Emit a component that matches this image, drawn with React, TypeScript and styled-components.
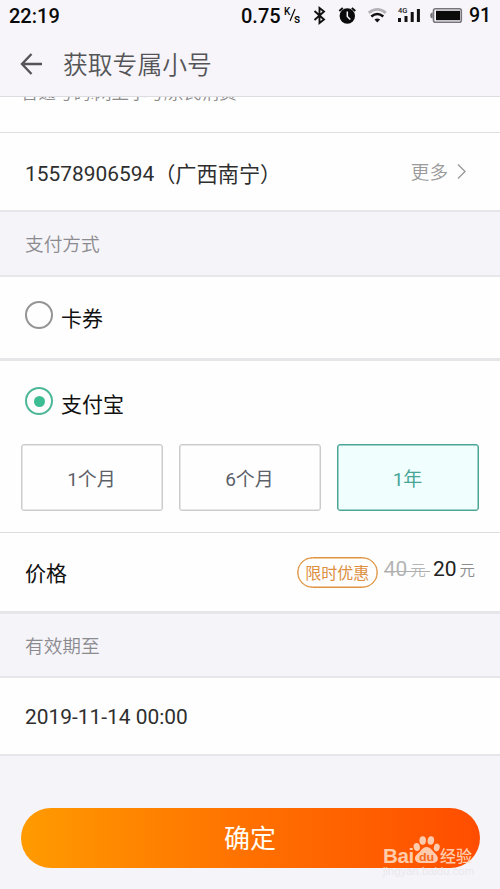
import React, { useState } from "react";
import styled, { createGlobalStyle } from "styled-components";

const GlobalStyle = createGlobalStyle`
  * { box-sizing: border-box; }
  body {
    margin: 0;
    background: #f5f4f9;
    font-family: Roboto, "Noto Sans CJK SC", sans-serif;
    color: #2e2e2e;
  }
  button { font-family: inherit; }
`;

const Screen = styled.div`
  position: relative;
  display: flex;
  flex-direction: column;
  width: 500px;
  height: 889px;
  overflow: hidden;
  background: #f5f4f9;
`;

const StatusBar = styled.div`
  display: flex;
  align-items: center;
  justify-content: space-between;
  flex: none;
  height: 32px;
  padding: 0 9px;
  background: #f7f5fa;
  color: #0a0a0a;
  font-size: 20px;
  font-weight: 500;
  line-height: 32px;
`;

const StatusIcons = styled.div`
  display: flex;
  align-items: center;
  height: 32px;
  svg { display: block; flex: none; }
`;

const Speed = styled.span`
  width: 43px;
  white-space: nowrap;
`;

const Battery = styled.span`
  width: 22px;
  white-space: nowrap;
  font-size: 19.5px;
`;

const TitleBar = styled.header`
  display: flex;
  align-items: center;
  flex: none;
  height: 65px;
  padding: 0 20px;
  gap: 20px;
  background: #f7f5fa;
  border-bottom: 1px solid #dddce0;
`;

const Title = styled.h1`
  margin: 0;
  padding-top: 3px;
  font-size: 24.8px;
  line-height: 36px;
  font-weight: 350;
  color: #555558;
`;

const ClippedRow = styled.div`
  flex: none;
  height: 36px;
  padding-left: 21px;
  overflow: hidden;
  background: #fefefe;
  border-bottom: 1px solid #dedee0;
`;

const ClippedText = styled.p`
  margin: -14px 0 0;
  font-size: 17.4px;
  line-height: 20px;
  font-weight: 350;
  color: #8c8c8c;
`;

const Row = styled.div<{ $h: number; $line?: number; $top?: number }>`
  display: flex;
  align-items: center;
  flex: none;
  height: ${(p) => p.$h}px;
  padding: ${(p) => p.$top ?? 0}px 25px 0;
  background: #fefefe;
  border-bottom: ${(p) => p.$line ?? 2}px solid #e6e5e9;
`;

const SectionTitle = styled.div<{ $h: number }>`
  display: flex;
  align-items: center;
  flex: none;
  height: ${(p) => p.$h}px;
  padding: 0 25px 2px;
  border-bottom: 2px solid #e7e6ea;
  font-size: 18.7px;
  font-weight: 350;
  color: #8b8a8f;
`;

const Value = styled.span`
  display: flex;
  padding-top: 1px;
  font-size: 20.9px;
  line-height: 30px;
  white-space: nowrap;
`;

const Region = styled.span`
  padding-top: 1px;
  font-size: 21.2px;
`;

const RowLabel = styled.span`
  padding-top: 3px;
  font-size: 21px;
  line-height: 30px;
  color: #111;
`;

const More = styled.span`
  display: flex;
  align-items: center;
  gap: 9px;
  margin-left: auto;
  padding: 0 8px 1px 0;
  font-size: 18.6px;
  line-height: 28px;
  font-weight: 350;
  color: #9a9a9a;
  svg { margin-top: -3px; }
`;

const RadioRow = styled.div<{ $h: number }>`
  display: flex;
  align-items: flex-start;
  height: ${(p) => p.$h}px;
  gap: 8px;
  cursor: pointer;
`;

const Radio = styled.span<{ $on: boolean }>`
  display: flex;
  align-items: center;
  justify-content: center;
  width: 28px;
  height: 28px;
  border: 2px solid ${(p) => (p.$on ? "#4cb898" : "#949494")};
  border-radius: 50%;
  &::after {
    content: "";
    width: 11px;
    height: 11px;
    border-radius: 50%;
    background: ${(p) => (p.$on ? "#3dbd94" : "transparent")};
  }
`;

const RadioLabel = styled.span`
  padding-top: 3px;
  font-size: 21px;
  line-height: 30px;
  color: #111;
`;

const CardRow = styled.div`
  flex: none;
  height: 84px;
  padding: 24px 25px 0;
  background: #fefefe;
  border-bottom: 3px solid #e6e5e8;
`;

const AlipayBlock = styled.div`
  flex: none;
  height: 172px;
  padding-top: 26px;
  background: #fefefe;
  border-bottom: 1px solid #dddde0;
  ${RadioRow} { padding-left: 25px; }
`;

const Plans = styled.div`
  display: grid;
  grid-template-columns: repeat(3, 142px);
  column-gap: 16px;
  padding-left: 21px;
`;

const Plan = styled.button<{ $on: boolean }>`
  height: 67px;
  padding: 0 1px 0 0;
  border: 1px solid ${(p) => (p.$on ? "#4aa597" : "#cbcbcb")};
  box-shadow: inset 0 0 0 0.5px ${(p) => (p.$on ? "#4aa597" : "#cfcfcf")};
  border-radius: 3px;
  background: ${(p) => (p.$on ? "#f0fefe" : "#fefefe")};
  color: ${(p) => (p.$on ? "#48a596" : "#5c6068")};
  font-size: 19px;
`;

const PriceBox = styled.div`
  display: flex;
  align-items: center;
  margin-left: auto;
`;

const Badge = styled.span`
  width: 81px;
  height: 31px;
  margin-right: 6px;
  border: 1px solid #df9340;
  box-shadow: inset 0 0 0 0.5px #df9340;
  border-radius: 16px;
  font-size: 16px;
  line-height: 31px;
  text-align: center;
  color: #dc9040;
`;

const Price = styled.span`
  margin-top: -4px;
  font-size: 21px;
  line-height: 30px;
  color: #222;
  white-space: pre;
`;

const Unit = styled.small`
  margin-left: 3px;
  font-size: 15.5px;
  font-weight: 350;
  color: #8c8c8c;
`;

const OldPrice = styled(Price)`
  position: relative;
  margin-right: 7px;
  color: #b5b5b5;
  ${Unit} { color: #b5b5b5; }
  &::after {
    content: "";
    position: absolute;
    left: 0;
    right: -4px;
    top: 17px;
    height: 1px;
    background: #aeaeae;
  }
`;

const Confirm = styled.button`
  flex: none;
  width: 459px;
  height: 60px;
  margin: 52px 0 0 21px;
  padding: 2px 1px 0 0;
  border: 0;
  border-radius: 30px;
  background: linear-gradient(90deg, #ff9b00, #ff7000 50%, #ff4d00);
  color: #fffdf4;
  font-size: 26px;
  line-height: 58px;
`;

const Watermark = styled.div`
  position: absolute;
  left: 383px;
  top: 835px;
  width: 96px;
  color: rgba(255, 225, 205, 0.85);
  pointer-events: none;
`;

const Brand = styled.div`
  display: flex;
  align-items: flex-end;
  height: 30px;
  font: 700 20.5px/18px "Liberation Sans", sans-serif;
  svg { display: block; flex: none; margin-bottom: 1px; }
`;

const BrandName = styled.span`
  width: 30px;
  letter-spacing: -0.3px;
`;

const BrandSuffix = styled.span`
  margin-left: 0;
  font: 500 16px/20px "Noto Sans CJK SC", sans-serif;
  white-space: nowrap;
`;

const Site = styled.div`
  font: 11.3px/13px "Liberation Sans", sans-serif;
  color: rgba(232, 229, 233, 0.85);
`;

const plans = ["1个月", "6个月", "1年"];

function SpeedUnit() {
  return (
    <svg width="29" height="32" viewBox="0 0 29 32" fill="#0a0a0a">
      <text x="0" y="15" fontFamily="Roboto" fontSize="10" fontWeight="500">K</text>
      <path d="M11 9 6 21" stroke="#0a0a0a" strokeWidth="1.2" />
      <text x="10" y="22.5" fontFamily="Roboto" fontSize="12" fontWeight="500">s</text>
    </svg>
  );
}

function Indicators() {
  return (
    <svg width="156" height="32" viewBox="0 0 156 32" fill="none">
      <path d="M1.5 11 11 19.5 6.5 23V8L11 11.500 1.5 20" stroke="#111" strokeWidth="1.9" />
      <g transform="translate(34.3 15.5)">
        <circle r="7.7" cy=".5" fill="#0a0a0a" />
        <path d="M-8-4.5-4.5-7.6M8-4.5 4.5-7.6" stroke="#111" strokeWidth="2" />
        <path d="M0-4V1L3 4" stroke="#f7f5fa" strokeWidth="1.5" />
      </g>
      <g transform="translate(64.3 22)">
        <path d="M-8.5-9.2Q0-16 8.5-9.2" stroke="#b4b2b7" strokeWidth="2.8" />
        <path d="M-6-5.5Q0-10.5 6-5.5" stroke="#111" strokeWidth="2.6" />
        <path d="M-2.8-2.5Q0-4.5 2.8-2.5L0 .5Z" fill="#111" />
      </g>
      <text x="85" y="13" fill="#222" fontFamily="Roboto" fontSize="7.5" fontWeight="500">4G</text>
      <path d="M86.5 22v-4M93 22v-6M99.2 22V12M105.4 22V9" stroke="#111" strokeWidth="3" />
      <rect x="120.5" y="8.8" width="27.8" height="13.4" rx="2" stroke="#77757a" strokeWidth="1.6" />
      <path d="M119.7 12.5q-2.500 0-2.500 3t2.500 3" fill="#77757a" />
      <path d="M123 10.800h24v9.400h-24z" fill="#0a0a0a" />
    </svg>
  );
}

function BackArrow() {
  return (
    <svg width="23" height="24" viewBox="0 0 23 24" fill="none" stroke="#555558" strokeWidth="2.4">
      <path d="M22 12H2M11.5 2 2 12 11.5 22" />
    </svg>
  );
}

function Paw() {
  return (
    <svg width="27" height="29" viewBox="0 0 25 29" preserveAspectRatio="none" fill="currentColor">
      <ellipse cx="3.5" cy="12" rx="2.9" ry="4" transform="rotate(-10 3.5 12)" />
      <ellipse cx="9" cy="5.5" rx="3" ry="4.2" />
      <ellipse cx="16.5" cy="5.5" rx="3" ry="4.2" transform="rotate(8 16.5 5.5)" />
      <ellipse cx="22" cy="12.5" rx="2.7" ry="3.9" transform="rotate(12 22 12.5)" />
      <path d="M12.5 12C8.500 12 8 16 4.500 18.500 0 22 1.500 28 7 28h11.500c5 0 6-5.500 2.500-9-3-3-4.500-7-8.500-7Z" />
      <text x="5.5" y="26" fill="#f66a1c" fontFamily="Liberation Sans" fontWeight="700" fontSize="11.5">du</text>
    </svg>
  );
}

export default function App() {
  const [method, setMethod] = useState("alipay");
  const [plan, setPlan] = useState("1年");

  return (
    <>
      <GlobalStyle />
      <Screen>
        <StatusBar>
          <span>22:19</span>
          <StatusIcons>
            <Speed>0.75</Speed>
            <SpeedUnit />
            <Indicators />
            <Battery>91</Battery>
          </StatusIcons>
        </StatusBar>
        <TitleBar>
          <BackArrow />
          <Title>获取专属小号</Title>
        </TitleBar>
        <ClippedRow>
          <ClippedText>普通号码:网上小号,亲民消费</ClippedText>
        </ClippedRow>
        <Row $h={79} $top={4}>
          <Value>
            15578906594<Region>（广西南宁）</Region>
          </Value>
          <More>
            更多
            <svg width="10" height="17" viewBox="0 0 10 17" fill="none" stroke="#9a9a9a" strokeWidth="1.4">
              <path d="M1 1.5 8 8.5 1 15.5" />
            </svg>
          </More>
        </Row>
        <SectionTitle $h={65}>支付方式</SectionTitle>
        <CardRow>
          <RadioRow $h={32} onClick={() => setMethod("card")}>
            <Radio $on={method === "card"} />
            <RadioLabel>卡券</RadioLabel>
          </RadioRow>
        </CardRow>
        <AlipayBlock>
          <RadioRow $h={57} onClick={() => setMethod("alipay")}>
            <Radio $on={method === "alipay"} />
            <RadioLabel>支付宝</RadioLabel>
          </RadioRow>
          <Plans>
            {plans.map((name) => (
              <Plan key={name} $on={plan === name} onClick={() => setPlan(name)}>
                {name}
              </Plan>
            ))}
          </Plans>
        </AlipayBlock>
        <Row $h={81} $line={3}>
          <RowLabel>价格</RowLabel>
          <PriceBox>
            <Badge>限时优惠</Badge>
            <OldPrice>
              40<Unit>元</Unit>
            </OldPrice>
            <Price>
              20<Unit>元</Unit>
            </Price>
          </PriceBox>
        </Row>
        <SectionTitle $h={64}>有效期至</SectionTitle>
        <Row $h={78}>
          <Value>2019-11-14 00:00</Value>
        </Row>
        <Confirm>确定</Confirm>
        <Watermark>
          <Brand>
            <BrandName>Bai</BrandName>
            <Paw />
            <BrandSuffix>经验</BrandSuffix>
          </Brand>
          <Site>jingyan.baidu.com</Site>
        </Watermark>
      </Screen>
    </>
  );
}
